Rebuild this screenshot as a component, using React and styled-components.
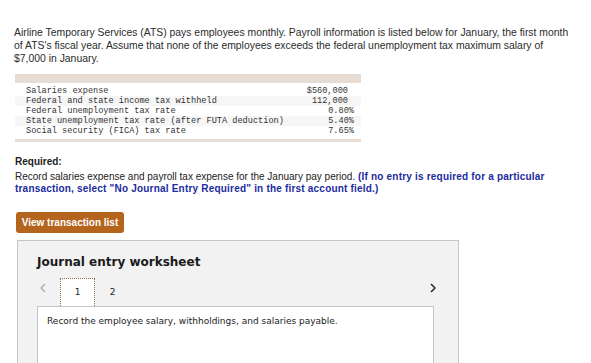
import React from 'react';
import styled, { createGlobalStyle } from 'styled-components';

const GlobalStyle = createGlobalStyle`
  body {
    margin: 0;
    background: #ffffff;
    font-family: "Liberation Sans", Arial, sans-serif;
    color: #222;
  }
`;

const StyledPage = styled.div`
  padding: 26px 14px 0 15px;
  width: 591px;
  height: 363px;
  box-sizing: border-box;
  overflow: hidden;
`;

const StyledIntro = styled.p`
  margin: 0 0 0 -1px;
  font-size: 10.4px;
  line-height: 13px;
  color: #2b2b2b;
`;

const StyledTable = styled.div`
  margin-top: 9px;
  width: 346px;
  border-bottom: 3px solid #e6dcd4;
`;

const StyledTableHead = styled.div`
  height: 9px;
  background: #e6dcd4;
`;

const StyledTableBody = styled.div`
  padding: 3px 0;
`;

const StyledRow = styled.div`
  display: flex;
  justify-content: space-between;
  padding: 0 7px 0 11px;
  font-family: "Liberation Mono", "Courier New", monospace;
  font-size: 8.6px;
  line-height: 10px;
  color: #333;
  background: ${(p) => (p.$shaded ? '#f6f6f6' : 'transparent')};
`;

const StyledValue = styled.span`
  padding-right: ${(p) => (p.$money ? '6px' : '0')};
`;

const StyledRequired = styled.div`
  margin-top: 14px;
  font-size: 10px;
  line-height: 12.5px;
  color: #222;
`;

const StyledRequiredLabel = styled.div`
  font-weight: bold;
  margin-bottom: 2px;
`;

const StyledHint = styled.span`
  color: #1b2ba0;
  font-weight: bold;
  letter-spacing: 0.2px;
`;

const StyledButton = styled.button`
  display: block;
  margin: 16px 0 0 1px;
  width: 108px;
  height: 21px;
  padding: 0;
  border: none;
  border-radius: 3px;
  background: #b4641c;
  color: #fff;
  font-family: "Liberation Sans", Arial, sans-serif;
  font-weight: bold;
  font-size: 10px;
`;

const StyledPanel = styled.div`
  margin: 7px 0 0 2px;
  width: 442px;
  height: 130px;
  box-sizing: border-box;
  background: #f2f2f2;
  border: 1px solid #c6c6c6;
  border-bottom: none;
  padding: 14px 22px 0 19px;
`;

const StyledPanelTitle = styled.h2`
  margin: 0;
  font-family: "DejaVu Sans", Verdana, sans-serif;
  font-size: 12px;
  line-height: 14px;
  font-weight: bold;
  color: #1a1a1a;
`;

const StyledTabs = styled.div`
  display: flex;
  align-items: flex-start;
  margin-top: 9px;
  height: 28px;
`;

const StyledArrow = styled.span`
  display: flex;
  width: 23px;
  padding-top: 5px;
  justify-content: ${(p) => (p.$right ? 'flex-end' : 'flex-start')};
  margin-left: ${(p) => (p.$right ? 'auto' : '0')};
  padding-left: ${(p) => (p.$right ? '0' : '3px')};
  box-sizing: border-box;
`;

const StyledTab = styled.div`
  width: 35px;
  height: 28px;
  box-sizing: border-box;
  display: flex;
  align-items: center;
  justify-content: center;
  font-family: "DejaVu Sans", Verdana, sans-serif;
  font-size: 9px;
  color: #222;
  background: ${(p) => (p.$selected ? '#fff' : 'transparent')};
  border: 1px dotted ${(p) => (p.$selected ? '#8f6e45' : 'transparent')};
  border-bottom: none;
  margin-bottom: -1px;
  position: relative;
  z-index: 1;
`;

const StyledContent = styled.div`
  width: 397px;
  height: 80px;
  box-sizing: border-box;
  background: #fff;
  border: 1px solid #c6c6c6;
  padding: 9px 9px;
  font-family: "DejaVu Sans", Verdana, sans-serif;
  font-size: 9px;
  line-height: 11px;
  color: #222;
`;

const Chevron = ({ dir, color }) => (
  <svg width="6" height="10" viewBox="0 0 6 10">
    <path
      d={dir === 'left' ? 'M5 1 L1 5 L5 9' : 'M1 1 L5 5 L1 9'}
      fill="none"
      stroke={color}
      strokeWidth="1.5"
    />
  </svg>
);

const rows = [
  ['Salaries expense', '$560,000', true],
  ['Federal and state income tax withheld', '112,000', true],
  ['Federal unemployment tax rate', '0.80%'],
  ['State unemployment tax rate (after FUTA deduction)', '5.40%'],
  ['Social security (FICA) tax rate', '7.65%'],
];

export default function App() {
  return (
    <StyledPage>
      <GlobalStyle />
      <StyledIntro>
        Airline Temporary Services (ATS) pays employees monthly. Payroll information is listed below for January, the first month
        of ATS's fiscal year. Assume that none of the employees exceeds the federal unemployment tax maximum salary of
        $7,000 in January.
      </StyledIntro>
      <StyledTable>
        <StyledTableHead />
        <StyledTableBody>
          {rows.map(([label, value, money], i) => (
            <StyledRow key={label} $shaded={i % 2 === 1}>
              <span>{label}</span>
              <StyledValue $money={money}>{value}</StyledValue>
            </StyledRow>
          ))}
        </StyledTableBody>
      </StyledTable>
      <StyledRequired>
        <StyledRequiredLabel>Required:</StyledRequiredLabel>
        Record salaries expense and payroll tax expense for the January pay period.{' '}
        <StyledHint>
          (If no entry is required for a particular transaction, select "No Journal Entry Required" in the first account field.)
        </StyledHint>
      </StyledRequired>
      <StyledButton>View transaction list</StyledButton>
      <StyledPanel>
        <StyledPanelTitle>Journal entry worksheet</StyledPanelTitle>
        <StyledTabs>
          <StyledArrow>
            <Chevron dir="left" color="#b0b0b0" />
          </StyledArrow>
          <StyledTab $selected>1</StyledTab>
          <StyledTab>2</StyledTab>
          <StyledArrow $right>
            <Chevron dir="right" color="#222" />
          </StyledArrow>
        </StyledTabs>
        <StyledContent>Record the employee salary, withholdings, and salaries payable.</StyledContent>
      </StyledPanel>
    </StyledPage>
  );
}
